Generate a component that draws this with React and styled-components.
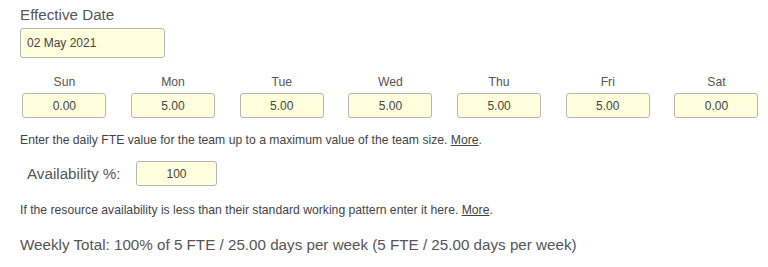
import styled, { createGlobalStyle } from "styled-components";

const GlobalStyle = createGlobalStyle`
  body {
    margin: 0;
    background: #fff;
    font-family: "Liberation Sans", Arial, sans-serif;
    color: #555;
  }
`;

const days = [
  { name: "Sun", value: "0.00" },
  { name: "Mon", value: "5.00" },
  { name: "Tue", value: "5.00" },
  { name: "Wed", value: "5.00" },
  { name: "Thu", value: "5.00" },
  { name: "Fri", value: "5.00" },
  { name: "Sat", value: "0.00" },
];

const App = () => {
  return (
    <Wrapper>
      <GlobalStyle />
      <Section>
        <Heading>Effective Date</Heading>
        <DateInput defaultValue="02 May 2021" />
      </Section>
      <DayGrid>
        {days.map((day) => (
          <DayCell key={day.name}>
            <DayLabel>{day.name}</DayLabel>
            <DayInput defaultValue={day.value} />
          </DayCell>
        ))}
      </DayGrid>
      <Hint>
        Enter the daily FTE value for the team up to a maximum value of the team size. <MoreLink>More</MoreLink>.
      </Hint>
      <AvailabilityRow>
        <AvailabilityLabel>Availability %:</AvailabilityLabel>
        <AvailabilityInput defaultValue="100" />
      </AvailabilityRow>
      <Hint spaced>
        If the resource availability is less than their standard working pattern enter it here. <MoreLink>More</MoreLink>.
      </Hint>
      <Total>Weekly Total: 100% of 5 FTE / 25.00 days per week (5 FTE / 25.00 days per week)</Total>
    </Wrapper>
  );
};

const Wrapper = styled.div`
  padding: 5px 0 0 20px;
  width: 768px;
  height: 267px;
  box-sizing: border-box;
`;
const Section = styled.div`
  display: flex;
  flex-direction: column;
  align-items: flex-start;
`;
const Heading = styled.div`
  font-size: 15.2px;
  line-height: 19px;
  color: #555;
`;
const Field = styled.input`
  box-sizing: border-box;
  background: #ffffdd;
  border: 1px solid #b5b5b5;
  border-radius: 3px;
  font-family: "Liberation Sans", Arial, sans-serif;
  font-size: 12px;
  color: #444;
  outline: none;
`;
const DateInput = styled(Field)`
  margin-top: 4px;
  width: 145px;
  height: 30px;
  padding: 0 6px;
`;
const DayGrid = styled.div`
  display: grid;
  grid-template-columns: repeat(7, 108.7px);
  margin: 17px 0 0 -10px;
`;
const DayCell = styled.div`
  display: flex;
  flex-direction: column;
  align-items: center;
  gap: 4px;
`;
const DayLabel = styled.div`
  font-size: 12.2px;
  line-height: 14px;
  color: #555;
`;
const DayInput = styled(Field)`
  width: 84px;
  height: 25px;
  text-align: center;
`;
const Hint = styled.p`
  margin: ${(props) => (props.spaced ? "17px 0 0" : "15px 0 0")};
  font-size: 12.2px;
  line-height: 14px;
  color: #444;
`;
const MoreLink = styled.a`
  color: #444;
  text-decoration: underline;
  cursor: pointer;
`;
const AvailabilityRow = styled.div`
  display: flex;
  align-items: center;
  margin-top: 14px;
  padding-left: 7px;
`;
const AvailabilityLabel = styled.span`
  font-size: 15.2px;
  width: 109px;
  color: #555;
`;
const AvailabilityInput = styled(Field)`
  width: 81px;
  height: 25px;
  text-align: center;
`;
const Total = styled.div`
  margin-top: 18px;
  font-size: 15.2px;
  line-height: 19px;
  color: #555;
`;

export default App;
